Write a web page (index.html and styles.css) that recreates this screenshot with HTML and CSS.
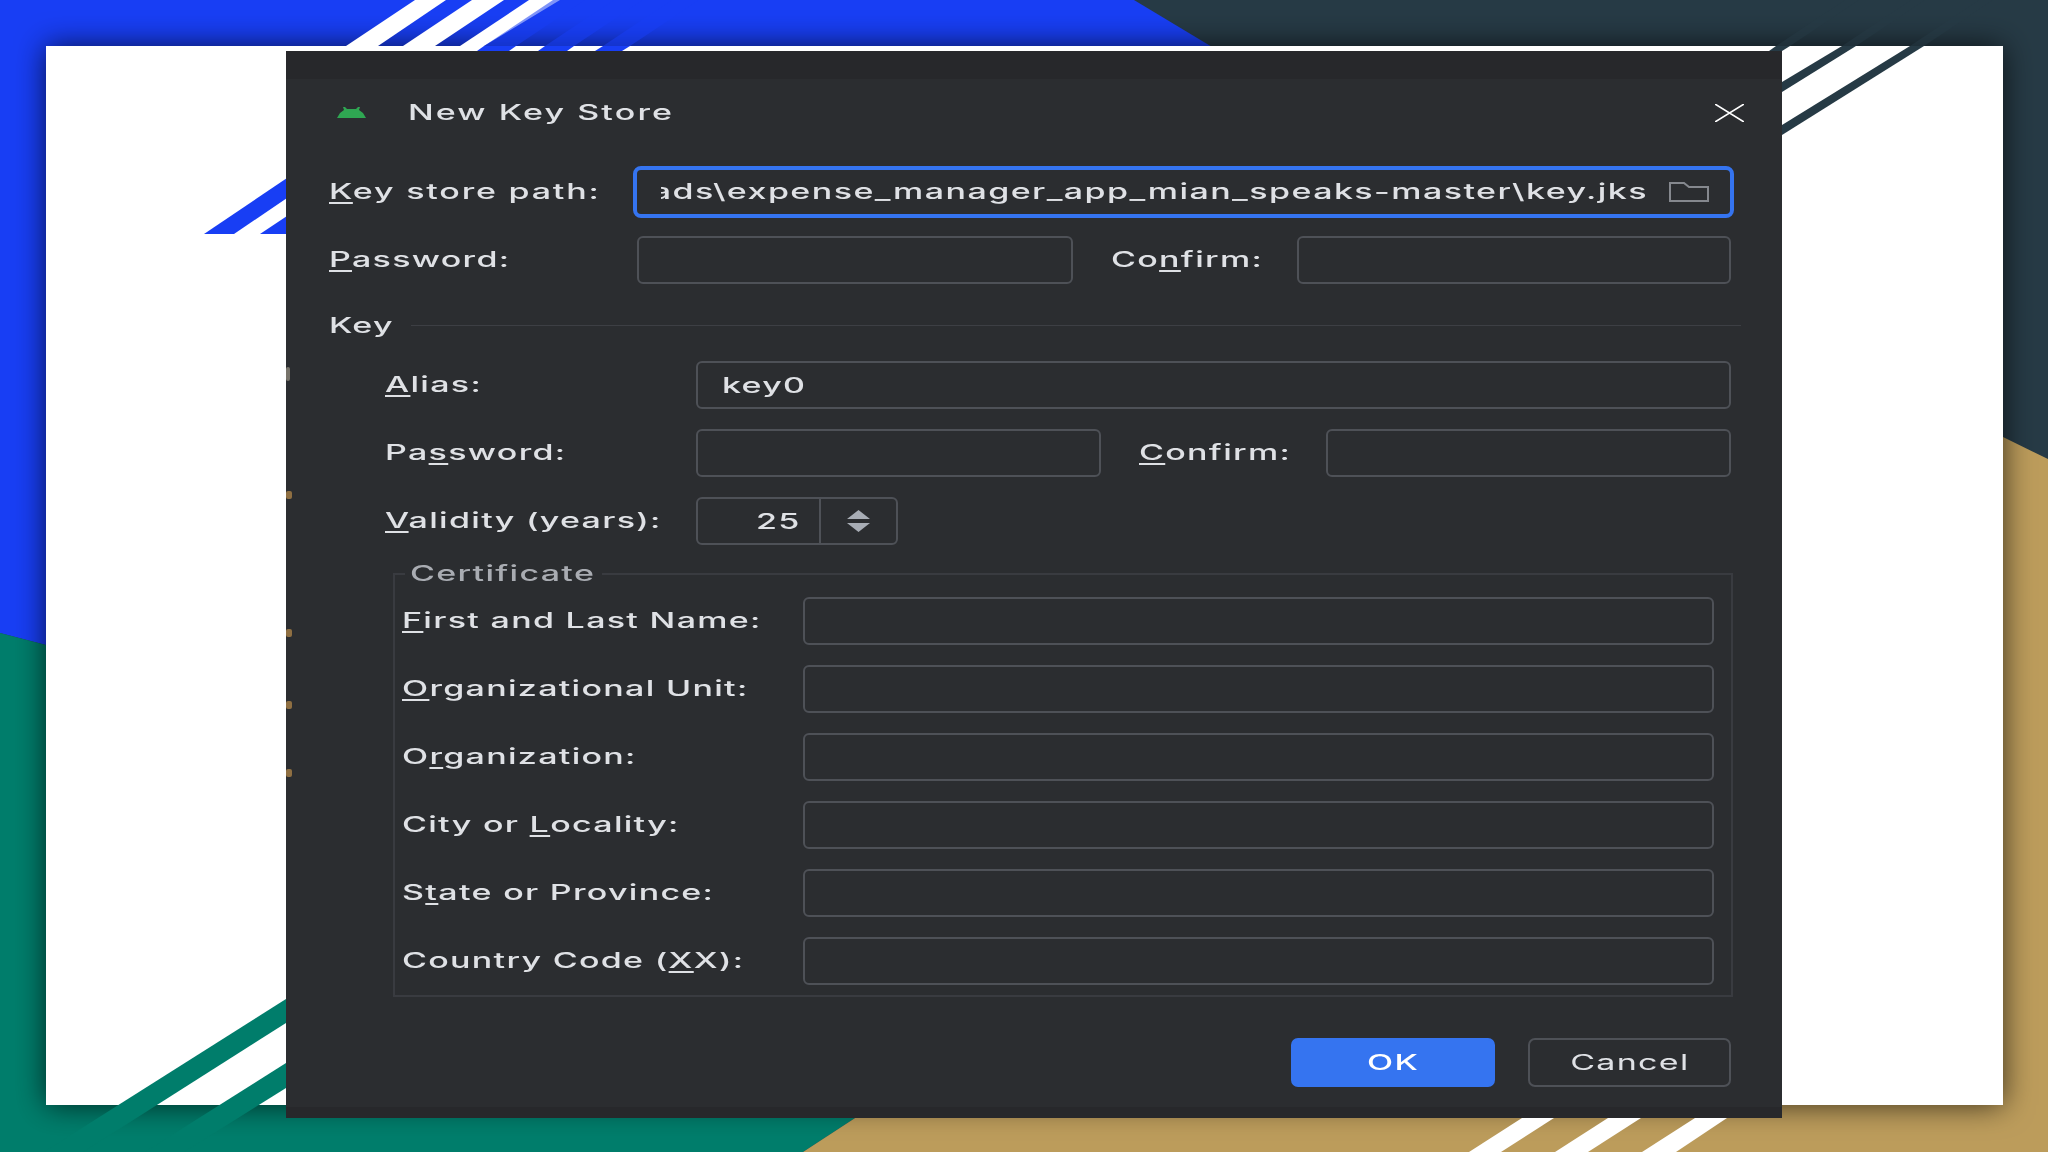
FILE: index.html
```html
<!DOCTYPE html>
<html lang="en">
<head>
    <meta charset="UTF-8">
    <title>New Key Store</title>
    <link rel="stylesheet" href="styles.css">
</head>
<body>
    <div class="stage">
        <!-- slide background -->
        <svg class="backdrop" viewBox="0 0 2048 1152" aria-hidden="true">
            <defs>
                <filter id="cardShadow" x="-10%" y="-10%" width="120%" height="120%">
                    <feDropShadow dx="0" dy="0" stdDeviation="15" flood-color="#000" flood-opacity="0.7"/>
                </filter>
            </defs>
            <rect width="2048" height="1152" fill="#263a45"/>
            <polygon fill="#183ef4" points="0,0 1134,0 1400,160 1105,921 46,645 0,633"/>
            <polygon fill="#007d6b" points="0,633 1105,921 1105,955 803,1152 0,1152"/>
            <polygon fill="#bc9c5b" points="2003,437 2048,459 2048,1152 803,1152 1105,955 1500,500"/>
            <rect x="46" y="46" width="1957" height="1059" fill="#fff" filter="url(#cardShadow)"/>
            <!-- top stripes -->
            <g fill="#fff">
                <polygon points="415,0 446,0 378,46 346,46"/>
                <polygon points="472,0 504,0 435,46 403,46"/>
                <polygon points="529,0 560,0 484,46 460,46"/>
            </g>
            <g fill="#183ef4" opacity="0.55">
                <polygon points="553,0 585,0 516,46 484,46"/>
                <polygon points="614,0 643,0 574,46 545,46"/>
                <polygon points="672,0 699,0 630,46 603,46"/>
            </g>
            <g fill="#183ef4">
                <polygon points="484,46 516,46 509,51 477,51"/>
                <polygon points="545,46 574,46 567,51 538,51"/>
                <polygon points="603,46 630,46 622,51 595,51"/>
                <polygon points="204,234 234,234 290,196 290,176"/>
                <polygon points="260,234 290,234 290,214"/>
            </g>
            <g fill="#263a45" opacity="0.5">
                <polygon points="1845,0 1859,0 1790,46 1776,46"/>
                <polygon points="1911,0 1925,0 1856,46 1842,46"/>
                <polygon points="1979,0 1993,0 1924,46 1910,46"/>
            </g>
            <g fill="#263a45">
                <polygon points="1776,46 1790,46 1782,51 1769,51"/>
                <polygon points="1842,46 1856,46 1782,92 1782,82"/>
                <polygon points="1910,46 1924,46 1782,135 1782,125"/>
            </g>
            <!-- bottom stripes -->
            <g fill="#007d6b">
                <polygon points="44,1152 83,1152 286,1023 286,999"/>
                <polygon points="145,1152 184,1152 286,1088 286,1063"/>
            </g>
            <g fill="#fff">
                <polygon points="1522,1118 1554,1118 1501,1152 1469,1152"/>
                <polygon points="1608,1118 1641,1118 1588,1152 1555,1152"/>
                <polygon points="1695,1118 1727,1118 1676,1152 1642,1152"/>
            </g>
        </svg>

        <div class="dialog">
            <!-- bits of the IDE window showing through at the dialog edge -->
            <i class="ghost ghost-a"></i>
            <i class="ghost ghost-b"></i>
            <i class="ghost ghost-c"></i>
            <i class="ghost ghost-d"></i>
            <i class="ghost ghost-e"></i>

            <div class="band-top"></div>

            <div class="dialog-body">
                <div class="title-row">
                    <svg class="android" viewBox="0 0 29 11" preserveAspectRatio="none" aria-hidden="true">
                        <path d="M0 11 L3 6 L7 3 L6 0 H8 L10 2 H19 L21 0 H23 L22 3 L26 6 L29 11 Z" fill="#2fa652"/>
                    </svg>
                    <span class="t dialog-title">New Key Store</span>
                    <svg class="close" viewBox="0 0 29 18" preserveAspectRatio="none" aria-hidden="true">
                        <path d="M0 0 L29 18 M29 0 L0 18" stroke="#fff" stroke-width="1.600" fill="none"/>
                    </svg>
                </div>

                <div class="row path-row">
                    <label class="lbl lbl-top"><span class="t"><u>K</u>ey store path:</span></label>
                    <div class="field focused">
                        <div class="path-clip"><span class="t t-right">ads\expense_manager_app_mian_speaks-master\key.jks</span></div>
                        <svg class="folder" viewBox="0 0 40 20" aria-hidden="true">
                            <path d="M1 19 V1 H15 L20 5 H39 V19 Z" stroke="#85888e" stroke-width="2" fill="none"/>
                        </svg>
                    </div>
                </div>

                <div class="row">
                    <label class="lbl lbl-top lbl-pw"><span class="t"><u>P</u>assword:</span></label>
                    <div class="field w-436"></div>
                    <label class="lbl lbl-confirm"><span class="t">Co<u>n</u>firm:</span></label>
                    <div class="field grow"></div>
                </div>

                <div class="section-row">
                    <span class="t section-name">Key</span>
                    <div class="section-line"></div>
                </div>

                <div class="key-block">
                    <div class="row first">
                        <label class="lbl lbl-key"><span class="t"><u>A</u>lias:</span></label>
                        <div class="field grow"><span class="t value">key0</span></div>
                    </div>
                    <div class="row">
                        <label class="lbl lbl-key"><span class="t">Pa<u>s</u>sword:</span></label>
                        <div class="field w-405"></div>
                        <label class="lbl lbl-confirm2"><span class="t"><u>C</u>onfirm:</span></label>
                        <div class="field grow"></div>
                    </div>
                    <div class="row">
                        <label class="lbl lbl-key"><span class="t"><u>V</u>alidity (years):</span></label>
                        <div class="spinner">
                            <div class="spinner-val"><span class="t t-right">25</span></div>
                            <div class="spinner-arrows">
                                <svg viewBox="0 0 25 22" aria-hidden="true">
                                    <path d="M12.500 0 L24 9 H1 Z M1 13 H24 L12.500 22 Z" fill="#a8adb5"/>
                                </svg>
                            </div>
                        </div>
                    </div>

                    <div class="cert">
                        <div class="cert-title"><span class="t">Certificate</span></div>
                        <div class="cert-row"><label class="lbl lbl-cert"><span class="t"><u>F</u>irst and Last Name:</span></label><div class="field grow"></div></div>
                        <div class="cert-row"><label class="lbl lbl-cert"><span class="t"><u>O</u>rganizational Unit:</span></label><div class="field grow"></div></div>
                        <div class="cert-row"><label class="lbl lbl-cert"><span class="t">O<u>r</u>ganization:</span></label><div class="field grow"></div></div>
                        <div class="cert-row"><label class="lbl lbl-cert"><span class="t">City or <u>L</u>ocality:</span></label><div class="field grow"></div></div>
                        <div class="cert-row"><label class="lbl lbl-cert"><span class="t">S<u>t</u>ate or Province:</span></label><div class="field grow"></div></div>
                        <div class="cert-row"><label class="lbl lbl-cert"><span class="t">Country Code (<u>X</u>X):</span></label><div class="field grow"></div></div>
                    </div>
                </div>

                <div class="buttons">
                    <button class="btn btn-ok"><span class="t t-mid">OK</span></button>
                    <button class="btn"><span class="t t-mid">Cancel</span></button>
                </div>
            </div>
        </div>
    </div>
</body>
</html>
```

FILE: styles.css
```css
html, body {
    margin: 0;
    padding: 0;
}
body {
    font-family: Inter, "Liberation Sans", sans-serif;
    font-size: 21px;
    font-weight: 500;
    color: #dfe1e5;
    background-color: #263a45;
}
.stage {
    position: relative;
    width: 2048px;
    height: 1152px;
    padding: 51px 0 0 286px;
    box-sizing: border-box;
    overflow: hidden;
}
.backdrop {
    position: absolute;
    left: 0;
    top: 0;
    width: 2048px;
    height: 1152px;
}

/* the screen recording is wider than it is tall, so the text is stretched */
.t {
    display: inline-block;
    white-space: nowrap;
    letter-spacing: 0.8px;
    transform: scaleX(1.62);
    transform-origin: left center;
    filter: blur(0.3px);
}
.t-right {
    transform-origin: right center;
}
.t-mid {
    transform-origin: center center;
}
.t u {
    text-decoration-thickness: 2px;
    text-underline-offset: 3px;
}

.dialog {
    position: relative;
    width: 1496px;
    height: 1067px;
    background-color: #2b2d30;
    display: flex;
    flex-direction: column;
}
.band-top {
    height: 28px;
    background-color: #27282b;
    flex: none;
}
.dialog-body {
    padding: 0 51px 0 43px;
    flex: 1;
    border-bottom: 11px solid #27282b;
}
.ghost {
    position: absolute;
    left: 0;
    width: 6px;
    height: 8px;
    border-radius: 2px;
    background-color: #8f6f42;
}
.ghost-a { top: 316px; height: 14px; width: 4px; background-color: #77736a; }
.ghost-b { top: 440px; }
.ghost-c { top: 578px; }
.ghost-d { top: 650px; }
.ghost-e { top: 718px; }

.title-row {
    height: 66px;
    display: flex;
    align-items: center;
    margin-right: -13px;
}
.android {
    width: 29px;
    height: 11px;
    margin-right: 43px;
    margin-left: 8px;
    flex: none;
}
.dialog-title {
    flex: 1;
    margin-left: -1px;
    letter-spacing: 1.3px;
}
.close {
    width: 29px;
    height: 18px;
    flex: none;
    margin-top: 2px;
}

.row {
    display: flex;
    align-items: center;
    height: 48px;
    margin-top: 20px;
}
.row.first {
    margin-top: 0;
}
.path-row {
    height: 52px;
    margin-top: 21px;
    margin-right: -3px;
}
.path-row .lbl .t {
    letter-spacing: 1.1px;
}
.path-row + .row {
    margin-top: 18px;
}

.lbl {
    display: block;
    flex: none;
    margin-top: -1px;
}
.lbl-top {
    width: 304px;
}
.lbl-pw {
    width: 308px;
}
.lbl-confirm {
    width: 186px;
    margin-left: 38px;
}
.lbl-confirm2 {
    width: 187px;
    margin-left: 38px;
}
.lbl-key {
    width: 311px;
}
.lbl-cert {
    width: 401px;
}

.field {
    height: 48px;
    box-sizing: border-box;
    border: 2px solid #4e5157;
    border-radius: 6px;
    display: flex;
    align-items: center;
}
.grow {
    flex: 1;
}
.w-436 {
    width: 436px;
    flex: none;
}
.w-405 {
    width: 405px;
    flex: none;
}
.field.focused {
    flex: 1;
    height: 52px;
    border: 4px solid #3574f0;
    padding: 0 21px 0 24px;
    border-radius: 8px;
}
.path-clip {
    flex: 1;
    overflow: hidden;
    display: flex;
    justify-content: flex-end;
    margin-right: 21px;
}
.path-clip .t {
    margin-top: -2px;
    letter-spacing: 0.88px;
}
.folder {
    width: 40px;
    height: 20px;
    flex: none;
}
.value {
    margin-left: 24px;
}

.section-row {
    display: flex;
    align-items: center;
    height: 38px;
    margin: 22px -10px 17px 0;
}
.section-name {
    width: 82px;
}
.section-line {
    flex: 1;
    height: 1px;
    background-color: #3d3f44;
}

.key-block {
    padding-left: 56px;
}
.spinner {
    width: 202px;
    height: 48px;
    box-sizing: border-box;
    border: 2px solid #4e5157;
    border-radius: 6px;
    display: flex;
}
.spinner-val {
    width: 123px;
    flex: none;
    display: flex;
    align-items: center;
    justify-content: flex-end;
    padding-right: 18px;
    box-sizing: border-box;
    border-right: 2px solid #4e5157;
}
.spinner-arrows {
    flex: 1;
    display: flex;
    align-items: center;
    justify-content: center;
}
.spinner-arrows svg {
    width: 25px;
    height: 22px;
}

.cert {
    position: relative;
    margin: 28px -2px 0 8px;
    height: 424px;
    box-sizing: border-box;
    border: 2px solid #393b40;
    padding: 22px 17px 0 7px;
}
.cert-title {
    position: absolute;
    left: 10px;
    top: -15px;
    width: 197px;
    height: 28px;
    line-height: 28px;
    padding-left: 5px;
    box-sizing: border-box;
    background-color: #2b2d30;
    color: #a9acb2;
}
.cert-row {
    display: flex;
    align-items: center;
    height: 48px;
    margin-bottom: 20px;
}

.buttons {
    display: flex;
    justify-content: flex-end;
    gap: 33px;
    margin-top: 41px;
}
.btn {
    width: 203px;
    height: 49px;
    box-sizing: border-box;
    background-color: transparent;
    border: 2px solid #4e5157;
    border-radius: 7px;
    color: #dfe1e5;
    font-family: inherit;
    font-size: 21px;
    font-weight: 400;
    padding: 0;
}
.btn-ok {
    width: 204px;
    background-color: #3574f0;
    border-color: #3574f0;
    color: #fff;
    font-weight: 500;
}
```
